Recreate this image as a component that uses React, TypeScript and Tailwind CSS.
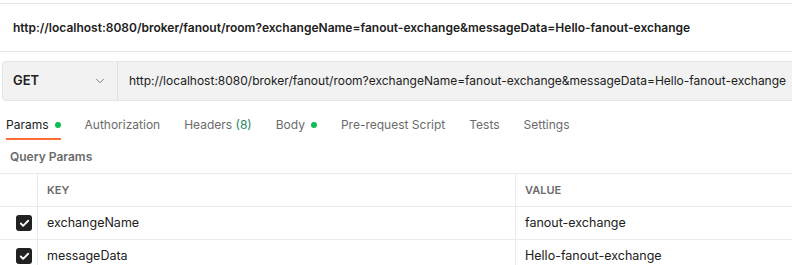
import { ChevronDown, Check } from "lucide-react";

const url =
  "http://localhost:8080/broker/fanout/room?exchangeName=fanout-exchange&messageData=Hello-fanout-exchange";

const tabs = [
  { label: "Params", dot: true, active: true },
  { label: "Authorization" },
  { label: "Headers", count: "(8)" },
  { label: "Body", dot: true },
  { label: "Pre-request Script" },
  { label: "Tests" },
  { label: "Settings" },
];

const rows = [
  { key: "exchangeName", value: "fanout-exchange" },
  { key: "messageData", value: "Hello-fanout-exchange" },
];

function Box() {
  return (
    <div className="w-4 h-4 rounded-[3px] bg-[#212121] flex items-center justify-center">
      <Check size={11} strokeWidth={4} className="text-white" />
    </div>
  );
}

export default function App() {
  return (
    <div
      className="w-[792px] h-[265px] overflow-hidden bg-white text-[12px] text-[#212121]"
      style={{ fontFamily: "Inter, 'Liberation Sans', sans-serif" }}
    >
      <div className="mt-[3px] h-[49px] border-y border-[#e6e6e6] flex items-center pl-[13px] font-semibold whitespace-nowrap">
        {url}
      </div>

      {/* request bar */}
      <div className="mt-[9px] ml-[2px] w-[810px] h-[40px] flex rounded-[4px] border border-[#e6e6e6] bg-[#f2f2f2]">
        <div className="w-[115px] shrink-0 flex items-center justify-between pl-[10px] pr-[10px] border-r border-[#e0e0e0]">
          <span className="font-semibold text-[13px]">GET</span>
          <ChevronDown size={14} strokeWidth={1.5} className="text-[#6b6b6b]" />
        </div>
        <div className="flex items-center pl-[11px] whitespace-nowrap">{url}</div>
      </div>

      {/* tabs */}
      <div className="mt-[9px] h-[30px] flex items-stretch text-[#6b6b6b]">
        {tabs.map((t, i) => (
          <div
            key={i}
            className={`flex items-center gap-[6px] ml-[6px] mr-[18px] border-b-2 ${
              t.active ? "border-[#ff6c37] text-[#212121]" : "border-transparent"
            }`}
          >
            <span className="pt-[2px]">
              {t.label}
              {t.count && <span className="text-[#268a6b]"> {t.count}</span>}
            </span>
            {t.dot && <span className="w-[6px] h-[6px] rounded-full bg-[#0cbb52] mt-[2px]" />}
          </div>
        ))}
      </div>

      <div className="h-[33px] flex items-center pl-[10px] font-semibold text-[#6b6b6b] text-[12px]">
        Query Params
      </div>

      {/* table */}
      <div className="border-t border-[#ebebeb]">
        <div className="flex h-[33px] border-b border-[#ebebeb] text-[11px] font-semibold text-[#6b6b6b]">
          <div className="w-[38px] border-r border-[#ebebeb]" />
          <div className="w-[478px] border-r border-[#ebebeb] flex items-center pl-[9px]">KEY</div>
          <div className="flex-1 flex items-center pl-[9px]">VALUE</div>
        </div>
        {rows.map((r) => (
          <div key={r.key} className="flex h-[33px] border-b border-[#ebebeb] text-[12.5px]">
            <div className="w-[38px] border-r border-[#ebebeb] flex items-center justify-end pr-[5px]">
              <Box />
            </div>
            <div className="w-[478px] border-r border-[#ebebeb] flex items-center pl-[9px]">{r.key}</div>
            <div className="flex-1 flex items-center pl-[9px]">{r.value}</div>
          </div>
        ))}
      </div>
    </div>
  );
}
